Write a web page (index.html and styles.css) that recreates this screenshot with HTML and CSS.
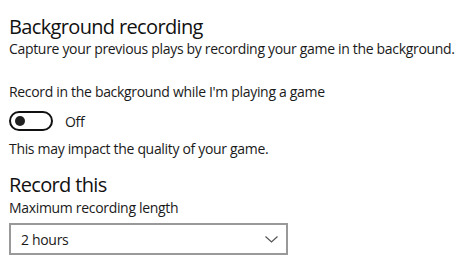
FILE: index.html
```html
<!DOCTYPE html>
<html lang="en">
<head>
  <meta charset="UTF-8" />
  <title>Captures</title>
  <link rel="stylesheet" href="styles.css">
</head>
<body>

  <!-- Background recording -->
  <h2 class="heading first">Background recording</h2>
  <p class="text">Capture your previous plays by recording your game in the background.</p>

  <p class="text label">Record in the background while I'm playing a game</p>
  <div class="toggle-row">
    <span class="toggle"><span class="knob"></span></span>
    <span class="text">Off</span>
  </div>
  <p class="text note">This may impact the quality of your game.</p>

  <!-- Record this -->
  <h2 class="heading second">Record this</h2>
  <p class="text sub">Maximum recording length</p>
  <div class="select">
    <span class="text">2 hours</span>
    <svg class="chevron" width="13" height="7" viewBox="0 0 13 7">
      <path d="M0.5 0.5 L6.5 6 L12.5 0.5" fill="none" stroke="#555" stroke-width="1.2" />
    </svg>
  </div>

</body>
</html>
```

FILE: styles.css
```css
* {
  margin: 0;
  padding: 0;
  box-sizing: border-box;
}

body {
  font-family: "Open Sans", "Noto Sans", Arial, sans-serif;
  background: #fff;
  color: #1a1a1a;
  padding: 0 9px;
}

.heading {
  font-size: 20px;
  font-weight: normal;
  line-height: 24px;
  letter-spacing: -0.65px;
  color: #111;
}

.heading.first {
  margin-top: 15px;
}

.heading.second {
  margin-top: 15px;
}

.text {
  font-size: 14px;
  line-height: 19px;
  letter-spacing: -0.32px;
  white-space: nowrap;
}

.label {
  margin-top: 24px;
}

.toggle-row {
  display: flex;
  align-items: center;
  gap: 12px;
  margin-top: 10px;
}

.toggle {
  display: flex;
  align-items: center;
  width: 44px;
  height: 20px;
  border: 2px solid #111;
  border-radius: 10px;
  padding-left: 4px;
}

.knob {
  width: 10px;
  height: 10px;
  border-radius: 50%;
  background: #222;
}

.note {
  margin-top: 8px;
}

.sub {
  margin-top: 1px;
}

.select {
  display: flex;
  align-items: center;
  justify-content: space-between;
  width: 279px;
  height: 32px;
  margin-top: 6px;
  border: 2px solid #999;
  padding: 0 8px 0 10px;
}

.chevron {
  display: block;
}
```
